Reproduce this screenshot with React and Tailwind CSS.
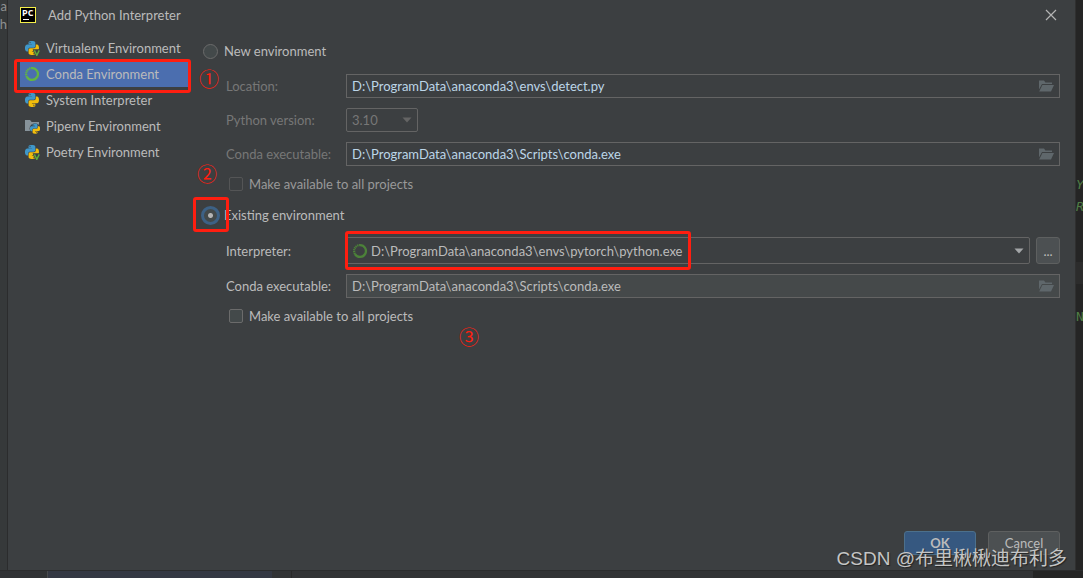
import { useState } from "react";

const PYTHON_HALF =
  "M14.25.18l.9.2.73.26.59.3.45.32.34.34.25.34.16.33.1.3.04.26.02.2-.01.13V8.5l-.05.63-.13.55-.21.46-.26.38-.3.31-.33.25-.35.19-.35.14-.33.1-.3.07-.26.04-.21.02H8.77l-.69.05-.59.14-.5.22-.41.27-.33.32-.27.35-.2.36-.15.37-.1.35-.07.32-.04.27-.02.21v3.06H3.17l-.21-.03-.28-.07-.32-.12-.35-.18-.36-.26-.36-.36-.35-.46-.32-.59-.28-.73-.21-.88-.14-1.05-.05-1.23.06-1.22.16-1.04.24-.87.32-.71.36-.57.4-.44.42-.33.42-.24.4-.16.36-.1.32-.05.24-.01h.16l.06.01h8.16v-.83H6.18l-.01-2.75-.02-.37.05-.34.11-.31.17-.28.25-.26.31-.23.38-.2.44-.18.51-.15.58-.12.64-.1.71-.06.77-.04.84-.02 1.27.05zm-6.3 1.98l-.23.33-.08.41.08.41.23.34.33.22.41.09.41-.09.33-.22.23-.34.08-.41-.08-.41-.23-.33-.33-.22-.41-.09-.41.09z";

const PythonMark = () => (
  <>
    <path d={PYTHON_HALF} fill="#3f97c9" />
    <path d={PYTHON_HALF} fill="#f2bd0c" transform="rotate(180 12 12)" />
  </>
);

const PythonIcon = ({ venv }) => (
  <svg viewBox="0 0 16 16" className="size-4 shrink-0" aria-hidden="true">
    <g transform="translate(1 1) scale(0.58)">
      <PythonMark />
    </g>
    {venv && (
      <>
        <path d="M8.6 9.2H16V16h-4.6z" fill="#3c3f41" />
        <path d="M10.4 10.4l2.4 5 2.4-5" fill="none" stroke="#5fad3c" strokeWidth="1.4" />
      </>
    )}
  </svg>
);

const PipenvIcon = () => (
  <svg viewBox="0 0 16 16" className="size-4 shrink-0" aria-hidden="true">
    <path d="M1 2h5l1.6 2H15v9H1z" fill="#87939a" />
    <circle cx="11" cy="10.6" r="5.4" fill="#3c3f41" />
    <g transform="translate(6 5.6) scale(0.42)">
      <PythonMark />
    </g>
  </svg>
);

const CondaIcon = ({ color = "#62b543" }) => (
  <svg viewBox="0 0 16 16" className="size-4 shrink-0" aria-hidden="true">
    <path d="M8 2.1a5.9 5.9 0 1 1-5 9" fill="none" stroke={color} strokeWidth="2.3" />
    <path d="M3 11.1A5.9 5.9 0 0 1 8 2.1" fill="none" stroke={color} strokeWidth="2.2" strokeDasharray="1.3 .6" />
  </svg>
);

const FolderIcon = () => (
  <svg viewBox="0 0 16 12" className="h-3 w-4" aria-hidden="true">
    <path d="M1 .5h5l1.4 2H14V4H4L1 9.6z" fill="#5f676b" />
    <path d="M4.4 5H16l-3 6.5H1.2z" fill="#5f676b" />
  </svg>
);

const Arrow = ({ color }) => (
  <svg viewBox="0 0 10 6" className="pointer-events-none absolute right-[6px] h-[6px] w-[10px]" aria-hidden="true">
    <path d="M.5.5h9L5 5.5z" fill={color} />
  </svg>
);

const items = [
  { name: "Virtualenv Environment", icon: <PythonIcon venv /> },
  { name: "Conda Environment", icon: <CondaIcon /> },
  { name: "System Interpreter", icon: <PythonIcon /> },
  { name: "Pipenv Environment", icon: <PipenvIcon /> },
  { name: "Poetry Environment", icon: <PythonIcon venv /> },
];

const PathField = ({ id, label, value, dim, readOnly, className }) => (
  <div className={`flex items-center pl-6 ${className}`}>
    <label htmlFor={id} className={`w-[120px] shrink-0 ${dim ? "text-[#777777]" : ""}`}>
      {label}
    </label>
    <div
      className={`flex h-6 min-w-0 flex-1 items-center border border-[#646464] pr-[5px] ${
        readOnly ? "bg-[#45494a]" : ""
      }`}
    >
      <input
        id={id}
        type="text"
        defaultValue={value}
        readOnly={readOnly}
        className={`h-full min-w-0 flex-1 bg-transparent px-[5px] outline-none ${
          readOnly ? "" : "text-[#bcd6e8]"
        }`}
      />
      <button type="button" aria-label="Browse">
        <FolderIcon />
      </button>
    </div>
  </div>
);

const Radio = ({ label, checked, onChange, className }) => (
  <label className={`flex h-6 items-center ${className}`}>
    <span className="flex w-[22px] shrink-0 items-center">
      <input
        type="radio"
        name="environment"
        checked={checked}
        onChange={onChange}
        className="ml-px size-[15px] appearance-none rounded-full border border-[#6b6b6b] bg-[#43494a] checked:-ml-px checked:size-[19px] checked:border-[3px] checked:border-[#3d6185] checked:bg-[radial-gradient(circle,#b4b4b4_0_2px,#43494a_3px)]"
      />
    </span>
    {label}
  </label>
);

const Check = ({ dim }) => (
  <label className={`mt-2 flex h-5 items-center gap-[6px] pl-[27px] ${dim ? "text-[#999999]" : ""}`}>
    <input
      type="checkbox"
      className={`size-[14px] appearance-none rounded-[2px] border checked:bg-[#4b6eaf] ${
        dim ? "border-[#545556]" : "border-[#6b6b6b] bg-[#43494a]"
      }`}
    />
    Make available to all projects
  </label>
);

const App = () => {
  const [active, setActive] = useState("Conda Environment");
  const [mode, setMode] = useState("existing");

  return (
    <div className="relative grid min-h-screen grid-cols-[8px_minmax(0,1fr)_8px] grid-rows-[1fr_8px] overflow-hidden bg-[#2b2b2b] font-['Lato','Noto_Sans_CJK_SC',sans-serif] text-[13px] leading-5 text-[#bbbbbb]">
      <div className="flex flex-col items-end overflow-hidden border-r border-[#2b2c2d] bg-[#36393a] text-[#8f9192]">
        <span className="leading-3">a</span>
        <span className="leading-6">h</span>
      </div>

      <main className="flex flex-col bg-[#3c3f41]">
        <header className="flex h-[29px] items-center pr-[18px] pl-3">
          <span className="flex size-4 flex-col border border-[#f5ef4a] bg-black pl-px font-['Open_Sans',sans-serif] text-[9px] leading-[9px] font-bold text-white">
            PC
            <span className="mt-[2px] ml-px h-px w-[6px] bg-white" />
          </span>
          <h1 className="ml-3 flex-1">Add Python Interpreter</h1>
          <button type="button" aria-label="Close">
            <svg viewBox="0 0 12 12" className="size-3" aria-hidden="true">
              <path d="M1 1l10 10M11 1L1 11" stroke="#b4b4b4" strokeWidth="1.2" />
            </svg>
          </button>
        </header>

        <div className="flex flex-1">
          <nav className="w-[194px] shrink-0 pt-[6px] pr-[14px] pl-3">
            {items.map((item) => (
              <button
                key={item.name}
                type="button"
                onClick={() => setActive(item.name)}
                className={`flex h-[26px] w-full items-center gap-[6px] pl-1 text-left whitespace-nowrap ${
                  active === item.name ? "bg-[#4b6eaf]" : ""
                }`}
              >
                {item.icon}
                {item.name}
              </button>
            ))}
          </nav>

          <form className="min-w-0 flex-1 pt-[10px] pr-[15px]">
            <Radio label="New environment" checked={mode === "new"} onChange={() => setMode("new")} />
            <PathField
              id="location"
              label="Location:"
              value="D:\ProgramData\anaconda3\envs\detect.py"
              dim
              className="mt-[11px]"
            />
            <div className="mt-[10px] flex items-center pl-6 text-[#777777]">
              <label htmlFor="version" className="w-[120px]">
                Python version:
              </label>
              <div className="relative flex items-center">
                <select
                  id="version"
                  className="h-6 w-[72px] appearance-none rounded-[2px] border border-[#646464] bg-transparent pl-[5px]"
                >
                  <option>3.10</option>
                </select>
                <Arrow color="#646464" />
              </div>
            </div>
            <PathField
              id="conda-new"
              label="Conda executable:"
              value="D:\ProgramData\anaconda3\Scripts\conda.exe"
              dim
              className="mt-[10px]"
            />
            <Check dim />

            <Radio
              label="Existing environment"
              checked={mode === "existing"}
              onChange={() => setMode("existing")}
              className="mt-[9px]"
            />
            <div className="mt-[10px] flex items-center pl-6">
              <label htmlFor="interpreter" className="w-[120px] shrink-0">
                Interpreter:
              </label>
              <div className="relative flex min-w-0 flex-1 items-center">
                <span className="pointer-events-none absolute left-[6px]">
                  <CondaIcon color="#4c8239" />
                </span>
                <select
                  id="interpreter"
                  className="h-[27px] w-full appearance-none rounded-[2px] border border-[#646464] bg-transparent pl-6"
                >
                  <option>D:\ProgramData\anaconda3\envs\pytorch\python.exe</option>
                </select>
                <Arrow color="#a3a6a8" />
              </div>
              <button
                type="button"
                className="ml-[6px] h-[27px] w-6 rounded-[3px] border border-[#5e6060] bg-[#4c5052]"
              >
                ...
              </button>
            </div>
            <PathField
              id="conda-existing"
              label="Conda executable:"
              value="D:\ProgramData\anaconda3\Scripts\conda.exe"
              readOnly
              className="mt-[10px]"
            />
            <Check />
          </form>
        </div>

        <footer className="flex justify-end gap-3 pr-[15px] pb-[15px]">
          <button
            type="button"
            className="h-6 w-[72px] rounded-[3px] border border-[#4c708c] bg-[#365880] font-bold"
          >
            OK
          </button>
          <button type="button" className="h-6 w-[72px] rounded-[3px] border border-[#5e6060] bg-[#4c5052]">
            Cancel
          </button>
        </footer>
      </main>

      <div className="flex flex-col overflow-hidden border-l border-[#303030] bg-[#252525] pt-[174px] font-['DejaVu_Sans_Mono',monospace] leading-[22px] text-[#4f7d45] italic">
        <span>Y</span>
        <span>R</span>
        <span className="mt-11 h-[22px] bg-[#2c2c2c]" />
        <span className="mt-[22px] not-italic">N</span>
      </div>

      <div className="col-span-3 flex border-t border-[#2b2c2d] bg-[#323335]">
        <span className="w-12 border-r border-[#47494b] bg-[#303234]" />
        <span className="w-[224px] bg-[#343843]" />
        <span className="w-5 border-r border-[#292929]" />
        <span className="flex-1" />
        <span className="w-[50px] bg-[#252525]" />
      </div>

      {/* tutorial annotations */}
      <div className="pointer-events-none absolute inset-0 font-['Noto_Sans_CJK_SC',sans-serif] text-xl leading-5 text-[#ff1e10]">
        <div className="absolute top-[59px] left-[14px] h-[34px] w-[177px] rounded-[3px] border-3" />
        <div className="absolute top-[197px] left-[193px] h-[35px] w-9 rounded-[3px] border-3" />
        <div className="absolute top-[231px] left-[345px] h-[39px] w-[346px] rounded-[3px] border-3" />
        <span className="absolute top-[69px] left-[199px]">①</span>
        <span className="absolute top-[164px] left-[197px]">②</span>
        <span className="absolute top-[327px] left-[459px]">③</span>
      </div>
      <p className="pointer-events-none absolute right-4 bottom-[7px] font-['Liberation_Sans','Noto_Sans_CJK_SC',sans-serif] text-[19px] leading-6 whitespace-nowrap text-[#c4c5c5] [text-shadow:1px_1px_1px_#222]">
        CSDN @布里楸楸迪布利多
      </p>
    </div>
  );
};

export default App;
